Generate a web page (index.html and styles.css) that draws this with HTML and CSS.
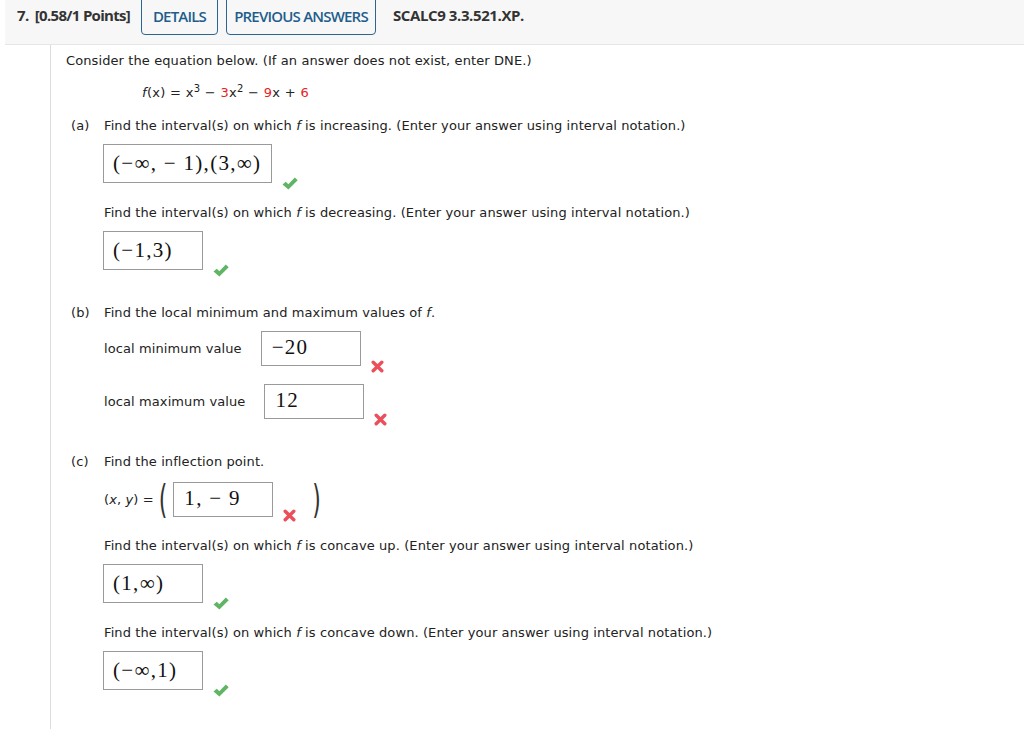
FILE: index.html
```html
<!DOCTYPE html>
<html>
<head>
<meta charset="utf-8">
<link rel="stylesheet" href="styles.css">
</head>
<body>
<header class="qhead">
  <div class="qtitle">7.&nbsp; [0.58/1 Points]</div>
  <div class="qbtn btn-details">DETAILS</div>
  <div class="qbtn btn-prev">PREVIOUS ANSWERS</div>
  <div class="qref">SCALC9 3.3.521.XP.</div>
</header>
<main class="qbody">
  <p class="intro">Consider the equation below. (If an answer does not exist, enter DNE.)</p>
  <p class="formula"><i>f</i>(x) = x<sup>3</sup> − <span class="red">3</span>x<sup>2</sup> − <span class="red">9</span>x + <span class="red">6</span></p>

  <div class="part part-a">
    <span class="plabel">(a)</span>
    <span class="ptext">Find the interval(s) on which <i>f</i> is increasing. (Enter your answer using interval notation.)</span>
  </div>
  <div class="ansrow row-a1">
    <div class="box box-wide">(−∞, − 1),(3,∞)</div>
    <svg class="mark check" viewBox="0 0 16 13" width="16" height="13"><path d="M0.5 7.6 L3.8 4.7 L6.3 7.3 L12.8 0.4 L15.7 3.3 L6.4 12.6 Z" fill="#5fb564"/></svg>
  </div>
  <p class="subq">Find the interval(s) on which <i>f</i> is decreasing. (Enter your answer using interval notation.)</p>
  <div class="ansrow">
    <div class="box">(−1,3)</div>
    <svg class="mark check" viewBox="0 0 16 13" width="16" height="13"><path d="M0.5 7.6 L3.8 4.7 L6.3 7.3 L12.8 0.4 L15.7 3.3 L6.4 12.6 Z" fill="#5fb564"/></svg>
  </div>

  <div class="part part-b">
    <span class="plabel">(b)</span>
    <span class="ptext">Find the local minimum and maximum values of <i>f</i>.</span>
  </div>
  <div class="valrow row-min">
    <span class="vlabel">local minimum value</span>
    <div class="box box-val">−20</div>
    <svg class="mark cross" viewBox="0 0 13 13" width="13" height="13"><path d="M2.2 2.2 L10.8 10.8 M10.8 2.2 L2.2 10.8" stroke="#ea4f5a" stroke-width="3.4" stroke-linecap="round"/></svg>
  </div>
  <div class="valrow row-max">
    <span class="vlabel">local maximum value</span>
    <div class="box box-val">12</div>
    <svg class="mark cross" viewBox="0 0 13 13" width="13" height="13"><path d="M2.2 2.2 L10.8 10.8 M10.8 2.2 L2.2 10.8" stroke="#ea4f5a" stroke-width="3.4" stroke-linecap="round"/></svg>
  </div>

  <div class="part part-c">
    <span class="plabel">(c)</span>
    <span class="ptext">Find the inflection point.</span>
  </div>
  <div class="valrow row-inf">
    <span class="vlabel">(<i>x</i>, <i>y</i>) =</span>
    <span class="bigparen lp">(</span>
    <div class="box box-val">1, − 9</div>
    <svg class="mark cross" viewBox="0 0 13 13" width="13" height="13"><path d="M2.2 2.2 L10.8 10.8 M10.8 2.2 L2.2 10.8" stroke="#ea4f5a" stroke-width="3.4" stroke-linecap="round"/></svg>
    <span class="bigparen rp">)</span>
  </div>
  <p class="subq sub-up">Find the interval(s) on which <i>f</i> is concave up. (Enter your answer using interval notation.)</p>
  <div class="ansrow">
    <div class="box">(1,∞)</div>
    <svg class="mark check" viewBox="0 0 16 13" width="16" height="13"><path d="M0.5 7.6 L3.8 4.7 L6.3 7.3 L12.8 0.4 L15.7 3.3 L6.4 12.6 Z" fill="#5fb564"/></svg>
  </div>
  <p class="subq">Find the interval(s) on which <i>f</i> is concave down. (Enter your answer using interval notation.)</p>
  <div class="ansrow">
    <div class="box">(−∞,1)</div>
    <svg class="mark check" viewBox="0 0 16 13" width="16" height="13"><path d="M0.5 7.6 L3.8 4.7 L6.3 7.3 L12.8 0.4 L15.7 3.3 L6.4 12.6 Z" fill="#5fb564"/></svg>
  </div>
</main>
</body>
</html>
```
FILE: styles.css
```css
html, body {
  margin: 0;
  padding: 0;
  background: #ffffff;
}
body {
  font-family: "DejaVu Sans", Verdana, sans-serif;
  font-size: 13px;
  letter-spacing: 0.1px;
  color: #222222;
  height: 729px;
  overflow: hidden;
}
.qhead {
  margin-left: 5px;
  height: 44px;
  background: #f7f7f7;
  border-bottom: 1px solid #e6e6e6;
  display: flex;
  align-items: flex-start;
  font-family: "Open Sans", sans-serif;
  font-size: 15px;
  font-weight: 700;
  letter-spacing: -0.7px;
}
.qtitle {
  margin-left: 12px;
  width: 124px;
  flex: none;
  white-space: nowrap;
  line-height: 30px;
  color: #333333;
}
.qbtn {
  margin-top: -5px;
  height: 40px;
  line-height: 40px;
  border: 1px solid #2b6591;
  border-radius: 0 0 4px 4px;
  color: #1f5d8c;
  text-align: center;
  box-sizing: border-box;
  background: #f7f7f7;
  flex: none;
  font-weight: 600;
  letter-spacing: -0.8px;
}
.btn-details {
  width: 77px;
}
.btn-prev {
  margin-left: 8px;
  width: 150px;
}
.qref {
  margin-left: 17px;
  line-height: 30px;
  color: #333333;
  letter-spacing: -0.4px;
}
.qbody {
  margin-left: 50px;
  border-left: 1px solid #dddddd;
  padding-left: 15px;
  padding-top: 7px;
  height: 677px;
}
p {
  margin: 0;
}
.intro, .formula, .subq, .part {
  line-height: 18px;
}
.formula {
  margin-top: 14px;
  padding-left: 76px;
  letter-spacing: 0.3px;
}
.formula sup {
  font-size: 10px;
  line-height: 0;
  vertical-align: 5px;
}
.red {
  color: #e8221d;
}
.part {
  display: flex;
  margin-top: 15px;
}
.plabel {
  width: 33px;
  padding-left: 5px;
}
.part-b, .part-c {
  margin-top: 34px;
}
.ansrow {
  display: flex;
  align-items: flex-end;
  margin-top: 9px;
  padding-left: 37px;
}
.box {
  box-sizing: border-box;
  width: 100px;
  height: 39px;
  border: 1px solid #9a9a9a;
  font-family: "Liberation Serif", "DejaVu Serif", serif;
  font-size: 21px;
  letter-spacing: 1.3px;
  color: #111111;
  padding-left: 9px;
  display: flex;
  align-items: center;
  padding-bottom: 1px;
  white-space: pre;
}
.box-wide {
  width: 169px;
}
.mark {
  margin-left: 10px;
  margin-bottom: -7px;
  flex: none;
}
.subq {
  margin-top: 21px;
  padding-left: 38px;
}
.sub-up {
  margin-top: 20px;
}
.valrow {
  display: flex;
  align-items: center;
  padding-left: 38px;
  margin-top: 9px;
}
.row-max {
  margin-top: 18px;
}
.valrow .box-val {
  height: 35px;
  padding-left: 10px;
  align-items: flex-start;
  padding-top: 3px;
}
.vlabel {
  margin-right: 19px;
}
.valrow .mark {
  align-self: flex-end;
  margin-bottom: -7px;
}
.row-inf .vlabel {
  margin-right: 0;
}
.row-inf {
  margin-top: 11px;
}
.bigparen {
  font-family: "DejaVu Sans", sans-serif;
  font-weight: 400;
  font-size: 22px;
  color: #333333;
  transform: scaleY(1.8);
  line-height: 22px;
  display: inline-block;
}
.lp {
  margin-left: 5px;
  margin-right: 6px;
}
.rp {
  margin-left: 16px;
}
.row-inf .mark {
  margin-bottom: -5px;
}
```
